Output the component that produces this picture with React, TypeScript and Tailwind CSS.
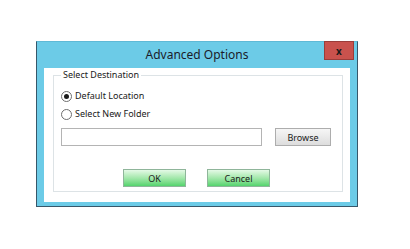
import React from "react";

function Radio({ checked, label }: { checked?: boolean; label: string }) {
  return (
    <div className="flex h-[18px] items-center">
      <span className="flex h-[11px] w-[11px] items-center justify-center rounded-full border border-[#6e6e6e] bg-white">
        {checked && <span className="h-[5px] w-[5px] rounded-full bg-[#1a1a1a]" />}
      </span>
      <span className="ml-[3px] text-[9px] text-[#1a1a1a]">{label}</span>
    </div>
  );
}

export default function App() {
  return (
    <div
      className="h-[249px] w-[410px] bg-white pl-[36px] pt-[41px]"
      style={{ fontFamily: '"Noto Sans", "Open Sans", sans-serif' }}
    >
      <div className="flex h-[166px] w-[322px] flex-col border border-[#37576a] border-t-[#5fb9d6] bg-[#6ccbe7]">
        <div className="relative flex h-[26px] items-center justify-center">
          <span className="text-[12px] text-[#1b1b2a]">Advanced Options</span>
          <div className="absolute right-[3px] top-[-1px] flex h-[19px] w-[30px] items-center justify-center border border-[#9a3d3a] bg-[#c9524d]">
            <span className="text-[10px] font-bold leading-none text-[#1a1a1a]">x</span>
          </div>
        </div>
        <div className="mx-[7px] mb-[4px] flex-1 bg-white pl-[9px] pr-[7px]">
          <fieldset className="border border-[#dde3e6] pl-[7px] pb-[4px]">
            <legend className="px-[2px] text-[9px] leading-[14px] text-[#1a1a1a]">
              Select Destination
            </legend>
            <div className="pt-[5px]">
              <Radio checked label="Default Location" />
              <Radio label="Select New Folder" />
            </div>
            <div className="mt-[5px] flex items-center">
              <div className="h-[18px] w-[201px] border border-[#b4b4b4] bg-white" />
              <button className="ml-[13px] h-[18px] w-[56px] border border-[#adadad] bg-gradient-to-b from-[#f6f6f6] to-[#dddddd] text-[9px] leading-none text-[#1a1a1a]">
                Browse
              </button>
            </div>
            <div className="mt-[23px] flex pl-[62px]">
              <button className="h-[18px] w-[63px] border border-[#8fb59a] bg-gradient-to-b from-[#e4f9e6] to-[#52d46d] text-[9px] leading-none text-[#1a1a1a]">
                OK
              </button>
              <button className="ml-[21px] h-[18px] w-[63px] border border-[#8fb59a] bg-gradient-to-b from-[#e4f9e6] to-[#52d46d] text-[9px] leading-none text-[#1a1a1a]">
                Cancel
              </button>
            </div>
          </fieldset>
        </div>
      </div>
    </div>
  );
}
